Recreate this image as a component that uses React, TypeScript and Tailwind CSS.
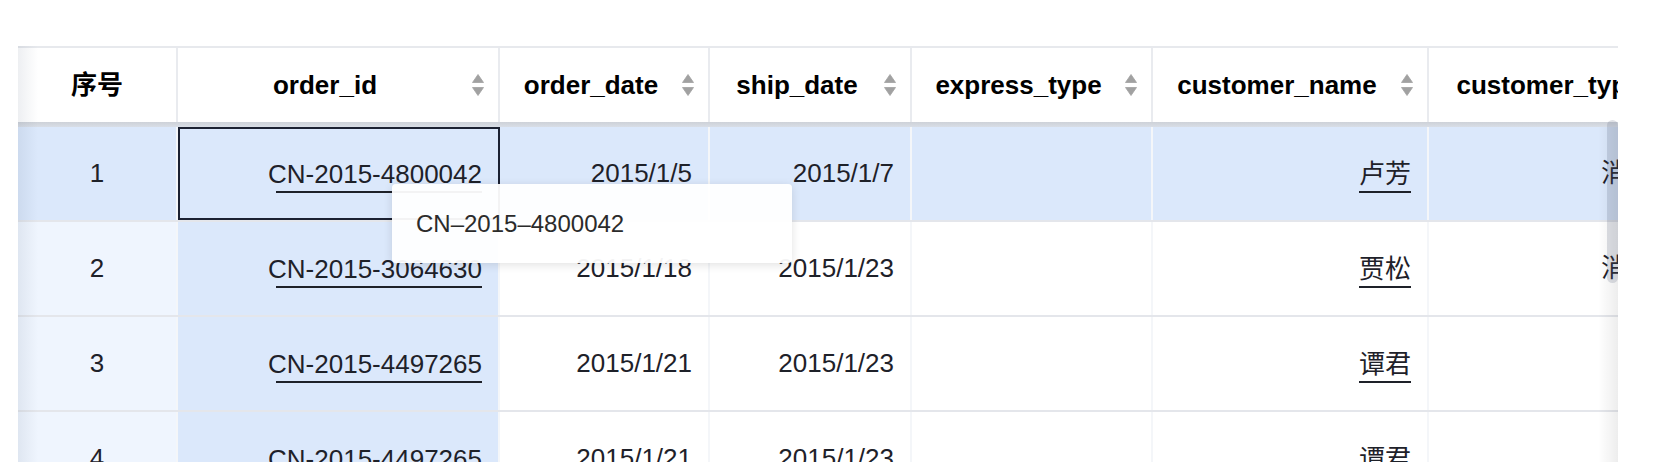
import React from "react";

type Col = { key: string; title: string; width: number; sortable: boolean };

const columns: Col[] = [
  { key: "idx", title: "序号", width: 160, sortable: false },
  { key: "order_id", title: "order_id", width: 322, sortable: true },
  { key: "order_date", title: "order_date", width: 210, sortable: true },
  { key: "ship_date", title: "ship_date", width: 202, sortable: true },
  { key: "express_type", title: "express_type", width: 241, sortable: true },
  { key: "customer_name", title: "customer_name", width: 276, sortable: true },
  { key: "customer_type", title: "customer_type", width: 268, sortable: true },
];

const rows = [
  ["1", "CN-2015-4800042", "2015/1/5", "2015/1/7", "", "卢芳", "消费者"],
  ["2", "CN-2015-3064630", "2015/1/18", "2015/1/23", "", "贾松", "消费者"],
  ["3", "CN-2015-4497265", "2015/1/21", "2015/1/23", "", "谭君", "公司"],
  ["4", "CN-2015-4497265", "2015/1/21", "2015/1/23", "", "谭君", "公司"],
];

function SortIcon() {
  return (
    <svg width="12" height="24" viewBox="0 0 12 24" className="mr-[14px] shrink-0">
      <path d="M6 1.5 L11.5 9.5 H0.5 Z" fill="#a1a1a1" strokeLinejoin="round" stroke="#a1a1a1" strokeWidth="0.8" />
      <path d="M0.5 14.5 H11.5 L6 22.5 Z" fill="#a1a1a1" strokeLinejoin="round" stroke="#a1a1a1" strokeWidth="0.8" />
    </svg>
  );
}

function Link({ text, offset }: { text: string; offset: number }) {
  return (
    <span className="relative inline-block leading-none">
      {text}
      <span
        className="absolute right-0 bottom-[-6px] h-[2px] bg-[#1e2129]"
        style={{ left: offset }}
      />
    </span>
  );
}

export default function App() {
  return (
    <div className="h-[462px] w-[1662px] overflow-hidden bg-white font-['Liberation_Sans','Noto_Sans_CJK_SC',sans-serif]">
      <div className="pl-[18px] pt-[46px]">
        <div className="relative w-[1600px] overflow-hidden">
          {/* header */}
          <div className="flex h-[76px] border-t-2 border-[#e7e9ed]">
            {columns.map((c) => (
              <div
                key={c.key}
                className="flex shrink-0 items-center border-r-2 border-[#e9ebef] bg-white text-[26px] font-bold text-black"
                style={{ width: c.width }}
              >
                <div className="flex-1 text-center whitespace-nowrap">{c.title}</div>
                {c.sortable && <SortIcon />}
              </div>
            ))}
          </div>
          <div className="h-[5px] bg-gradient-to-b from-[#cdd1d8] to-[#d9dee6]" />

          {/* body */}
          {rows.map((r, ri) => (
            <div key={ri} className="flex h-[95px] border-b-2 border-[#e4e6eb]">
              {r.map((v, ci) => {
                const col = columns[ci];
                const selectedRow = ri === 0;
                const selectedCell = ri === 0 && ci === 1;
                let bg = "bg-white";
                if (selectedRow || ci === 1) bg = "bg-[#dbe8fb]";
                else if (ci === 0) bg = "bg-[#eff5fe]";
                return (
                  <div
                    key={ci}
                    className={`flex shrink-0 items-center whitespace-nowrap text-[26px] text-[#1e2129] ${bg} ${
                      ci === 0 ? "justify-center" : "justify-end pr-[16px]"
                    } ${
                      selectedCell
                        ? "border-2 border-[#1b2132]"
                        : "border-r-2 border-[#f4f6f9]"
                    }`}
                    style={{ width: col.width }}
                  >
                    {ci === 1 ? (
                      <Link text={v} offset={8} />
                    ) : ci === 5 ? (
                      <Link text={v} offset={0} />
                    ) : (
                      v
                    )}
                  </div>
                );
              })}
            </div>
          ))}

          {/* scroll shadows */}
          <div className="pointer-events-none absolute left-0 top-0 bottom-0 w-[20px] bg-gradient-to-r from-[rgba(60,80,110,0.09)] to-transparent" />
          <div className="pointer-events-none absolute right-0 top-[81px] bottom-0 w-[20px] bg-gradient-to-l from-[rgba(0,0,0,0.07)] to-transparent" />

          {/* scrollbar thumb */}
          <div className="absolute right-0 top-[74px] h-[163px] w-[11px] rounded-full bg-[rgba(90,100,125,0.2)]" />

          {/* tooltip */}
          <div className="absolute left-[374px] top-[138px] flex h-[79px] w-[400px] items-center rounded-[4px] bg-white/95 pl-[24px] text-[24px] text-[#2b2b2b] shadow-[0_2px_10px_rgba(0,0,0,0.12)]">
            CN–2015–4800042
          </div>
        </div>
      </div>
    </div>
  );
}
